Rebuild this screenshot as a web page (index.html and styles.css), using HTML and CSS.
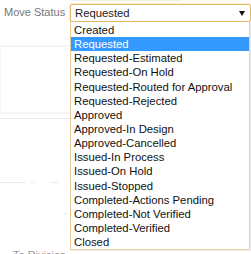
FILE: index.html
```html
<!DOCTYPE html>
<html>
<head>
<meta charset="utf-8">
<link rel="stylesheet" href="styles.css">
</head>
<body>
<div class="page">
  <div class="stub"></div>
  <div class="field">
    <div class="label">Move Status</div>
    <div class="select-wrap">
      <div class="select">
        <span class="value">Requested</span>
        <span class="arrow"></span>
      </div>
      <ul class="options">
        <li>Created</li>
        <li class="selected">Requested</li>
        <li>Requested-Estimated</li>
        <li>Requested-On Hold</li>
        <li>Requested-Routed for Approval</li>
        <li>Requested-Rejected</li>
        <li>Approved</li>
        <li>Approved-In Design</li>
        <li>Approved-Cancelled</li>
        <li>Issued-In Process</li>
        <li>Issued-On Hold</li>
        <li>Issued-Stopped</li>
        <li>Completed-Actions Pending</li>
        <li>Completed-Not Verified</li>
        <li>Completed-Verified</li>
        <li>Closed</li>
      </ul>
    </div>
  </div>
  <div class="band"></div>
  <div class="panel"></div>
  <div class="band2"></div>
  <div class="rule"></div>
  <div class="dashes"></div>
  <div class="dot"></div>
  <div class="next-label">To Division</div>
</div>
</body>
</html>
```

FILE: styles.css
```css
html, body {
  margin: 0;
  padding: 0;
  background: #ffffff;
}
body {
  font-family: "Liberation Sans", Arial, sans-serif;
  overflow: hidden;
}
.page {
  width: 251px;
  height: 254px;
  overflow: hidden;
}
.stub {
  margin-left: 70px;
  width: 112px;
  height: 1px;
  background: #f1f1f1;
  border-radius: 0 0 2px 0;
}
.field {
  display: flex;
  margin-top: 3px;
  height: 18px;
}
.label {
  width: 66px;
  padding-left: 4px;
  font-size: 11px;
  line-height: 16px;
  color: #777777;
}
.select-wrap {
  position: relative;
  width: 181px;
}
.select {
  box-sizing: border-box;
  height: 18px;
  border: 1px solid #e6b866;
  border-radius: 2px;
  box-shadow: 0 0 1px 1px rgba(240, 200, 120, 0.35);
  display: flex;
  align-items: center;
  justify-content: space-between;
  padding: 0 5px 0 4px;
  background: #fff;
}
.value {
  font-size: 11.3px;
  line-height: 16px;
  color: #1a1a1a;
}
.arrow {
  width: 0;
  height: 0;
  border-left: 3px solid transparent;
  border-right: 3px solid transparent;
  border-top: 5px solid #111;
  margin-top: 1px;
}
.options {
  position: absolute;
  top: 18px;
  left: 0;
  width: 180px;
  box-sizing: border-box;
  margin: 0;
  padding: 1px 0 0 0;
  list-style: none;
  background: #fff;
  border-left: 1px solid #e6c998;
  border-right: 1px solid #ead4ac;
  border-bottom: 1px solid #ead4ac;
  box-shadow: 1px 1px 0 #ececec;
}
.options li {
  font-size: 11.3px;
  line-height: 14.15px;
  height: 14.15px;
  padding-left: 3px;
  color: #111;
  white-space: nowrap;
}
.options li.selected {
  background: #3399ff;
  color: #fff;
}
.band {
  margin-top: 23px;
  width: 70px;
  height: 2px;
  background: #f4f4f4;
}
.panel {
  width: 70px;
  height: 65px;
  border-left: 1px solid #f8f8f8;
  box-sizing: border-box;
}
.band2 {
  width: 70px;
  height: 2px;
  background: #f5f5f5;
}
.rule {
  margin-top: 4px;
  width: 70px;
  height: 1px;
  background: #e6e6e6;
}
.dashes {
  margin-top: 63px;
  width: 58px;
  height: 1px;
  background: linear-gradient(to right, #e8e8e8 0 25px, transparent 25px 31px, #ededed 31px 35px, transparent 35px 51px, #e8e8e8 51px 58px);
}
.dot {
  margin-top: 30px;
  margin-left: 65px;
  width: 1px;
  height: 1px;
  background: #bbbbbb;
}
.next-label {
  margin-top: 34px;
  padding-left: 13px;
  font-size: 11px;
  color: #999;
  line-height: 14px;
}
```
